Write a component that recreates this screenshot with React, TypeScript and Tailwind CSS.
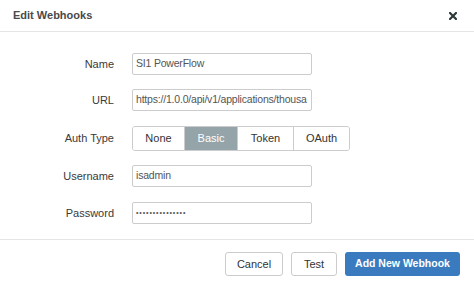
import React from "react";

const fields = [
  { label: "Name", value: "SI1 PowerFlow" },
  { label: "URL", value: "https://1.0.0/api/v1/applications/thousa" },
];

const creds = [
  { label: "Username", value: "isadmin" },
  { label: "Password", value: "•••••••••••••••" },
];

const authTypes = ["None", "Basic", "Token", "OAuth"];

function Row({ label, children, className = "" }: { label: string; children: React.ReactNode; className?: string }) {
  return (
    <div className={`flex items-center ${className}`}>
      <div className="w-[115px] shrink-0 pr-[1px] text-right text-[11px] text-[#3a3a3a]">{label}</div>
      <div className="ml-[17px]">{children}</div>
    </div>
  );
}

function TextBox({ value }: { value: string }) {
  return (
    <div className="flex h-[22px] w-[180px] items-center overflow-hidden whitespace-nowrap rounded-[2px] border border-[#ccc] bg-white px-[3px] text-[10.5px] tracking-[-0.2px] text-[#555]">
      {value}
    </div>
  );
}

export default function App() {
  return (
    <div className="h-[289px] w-[474px] bg-white font-['Liberation_Sans',Arial,sans-serif]">
      <div className="flex h-full flex-col rounded-[4px] bg-white">
        <div className="flex h-[32px] items-center justify-between border-b border-[#e5e5e5] pl-[13px] pr-[17px]">
          <span className="text-[11px] font-bold text-[#4a4a4a]">Edit Webhooks</span>
          <svg width="8" height="8" viewBox="0 0 8 8" className="text-[#2b3a3a]">
            <path d="M1 1 L7 7 M7 1 L1 7" stroke="currentColor" strokeWidth="2.2" strokeLinecap="square" />
          </svg>
        </div>

        <div className="flex flex-col border-b border-[#e5e5e5] pt-[21px] pb-[15px]">
          <Row label={fields[0].label}>
            <TextBox value={fields[0].value} />
          </Row>
          <Row label={fields[1].label} className="mt-[14px]">
            <TextBox value={fields[1].value} />
          </Row>
          <Row label="Auth Type" className="mt-[15px]">
            <div className="flex h-[25px] overflow-hidden rounded-[3px] border border-[#ccc] text-[11px]">
              {authTypes.map((t, i) => (
                <div
                  key={t}
                  className={`flex items-center justify-center ${
                    i === 0 ? "w-[51px]" : i === 1 ? "w-[53px]" : "w-[56px]"
                  } ${i > 0 ? "border-l border-[#ccc]" : ""} ${
                    t === "Basic" ? "bg-[#95a4a8] text-white" : "bg-white text-[#333]"
                  }`}
                >
                  {t}
                </div>
              ))}
            </div>
          </Row>
          <Row label={creds[0].label} className="mt-[14px]">
            <TextBox value={creds[0].value} />
          </Row>
          <Row label={creds[1].label} className="mt-[15px]">
            <div className="flex h-[22px] w-[180px] items-center overflow-hidden whitespace-nowrap rounded-[2px] border border-[#ccc] bg-white px-[3px] text-[7px] tracking-[0.9px] text-[#555]">
              {creds[1].value}
            </div>
          </Row>
        </div>

        <div className="flex justify-end gap-[8px] pt-[12px] pr-[14px] text-[11px]">
          <button className="h-[24px] w-[58px] rounded-[3px] border border-[#ccc] bg-white text-[#333]">Cancel</button>
          <button className="h-[24px] w-[46px] rounded-[3px] border border-[#ccc] bg-white text-[#333]">Test</button>
          <button className="h-[24px] w-[115px] rounded-[3px] bg-[#3a7bc0] text-[10.5px] font-bold text-white">Add New Webhook</button>
        </div>
      </div>
    </div>
  );
}
